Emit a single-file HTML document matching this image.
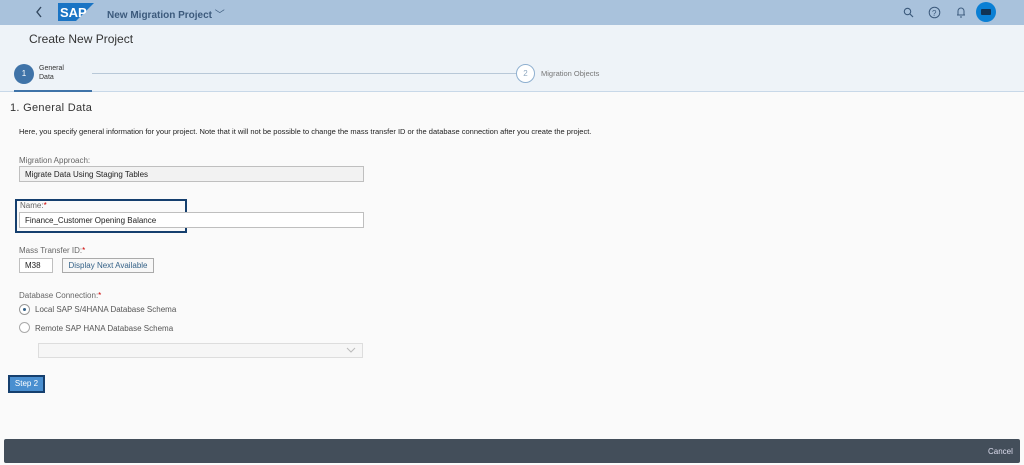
<!DOCTYPE html>
<html><head><meta charset="utf-8"><style>
*{box-sizing:border-box;margin:0;padding:0}
body{width:1024px;height:465px;overflow:hidden;background:#fafafa;font-family:"Liberation Sans",sans-serif;position:relative;color:#333}
.abs{position:absolute}
.shell{left:0;top:0;width:1024px;height:25px;background:#a9c2dc}
.hdr{left:0;top:25px;width:1024px;height:67px;background:#eef3f8;border-bottom:1px solid #c8d8e8}
.lbl{font-size:8px;color:#666}
.inp{background:#fff;border:1px solid #bfbfbf;font-size:8px;color:#222;padding:0 5px;display:flex;align-items:center}
.star{color:#c00}
</style></head><body>
<div class="abs shell"></div>
<svg class="abs" style="left:34px;top:5px" width="10" height="14"><path d="M7 2 L3 7 L7 12" stroke="#32475e" stroke-width="1.4" fill="none"/></svg>
<svg class="abs" style="left:58px;top:3px" width="36" height="18"><polygon points="0,0 36,0 18,18 0,18" fill="#1a74c4"/><text x="2" y="14" font-family="Liberation Sans" font-weight="bold" font-size="13" fill="#fff">SAP</text></svg>
<div class="abs" style="left:107px;top:6px;font-size:10px;font-weight:bold;color:#3c5a7c">New Migration Project <span style="font-weight:normal">﹀</span></div>
<svg class="abs" style="left:903px;top:7px" width="11" height="11"><circle cx="4.5" cy="4.5" r="3.2" stroke="#3c5a7c" fill="none" stroke-width="1.1"/><path d="M7 7 L10 10" stroke="#3c5a7c" stroke-width="1.2"/></svg>
<svg class="abs" style="left:928px;top:6px" width="13" height="13"><circle cx="6.5" cy="6.5" r="5.3" stroke="#3c5a7c" fill="none" stroke-width="1"/><text x="4" y="10" font-size="8" fill="#3c5a7c" font-family="Liberation Sans">?</text></svg>
<svg class="abs" style="left:955px;top:6px" width="12" height="13"><path d="M3 9 V5 a3 3 0 0 1 6 0 V9 H2 H10 M5 11 H7" stroke="#3c5a7c" fill="none" stroke-width="1"/></svg>
<div class="abs" style="left:976px;top:2px;width:20px;height:20px;border-radius:50%;background:#0a7fd4"><div class="abs" style="left:5px;top:7px;width:10px;height:6px;background:#113355;border-radius:1px"></div></div>
<div class="abs hdr"></div>
<div class="abs" style="left:29px;top:32px;font-size:12px;color:#333">Create New Project</div>
<div class="abs" style="left:14px;top:64px;width:20px;height:20px;border-radius:50%;background:#3f73a8;color:#fff;font-size:8px;text-align:center;line-height:20px">1</div>
<div class="abs" style="left:39px;top:64px;font-size:7px;line-height:9px;color:#333">General<br>Data</div>
<div class="abs" style="left:14px;top:90px;width:78px;height:2px;background:#3f73a8"></div>
<div class="abs" style="left:92px;top:73px;width:424px;height:1px;background:#b8c8d8"></div>
<div class="abs" style="left:516px;top:64px;width:19px;height:19px;border-radius:50%;border:1px solid #8fb0d0;color:#8fa8c0;font-size:8px;text-align:center;line-height:17px;background:#fff">2</div>
<div class="abs" style="left:541px;top:69px;font-size:7.5px;color:#777">Migration Objects</div>
<div class="abs" style="left:10px;top:102px;font-size:11px;color:#333;letter-spacing:0.3px">1. General Data</div>
<div class="abs" style="left:19px;top:127px;font-size:7.5px;color:#222">Here, you specify general information for your project. Note that it will not be possible to change the mass transfer ID or the database connection after you create the project.</div>
<div class="abs lbl" style="left:19px;top:156px">Migration Approach:</div>
<div class="abs inp" style="left:19px;top:166px;width:345px;height:16px;background:#f2f2f2">Migrate Data Using Staging Tables</div>
<div class="abs" style="left:15px;top:199px;width:172px;height:34px;border:2px solid #153f6e"></div>
<div class="abs lbl" style="left:20px;top:201px">Name:<span class="star">*</span></div>
<div class="abs inp" style="left:19px;top:212px;width:345px;height:16px">Finance_Customer Opening Balance</div>
<div class="abs lbl" style="left:19px;top:246px">Mass Transfer ID:<span class="star">*</span></div>
<div class="abs inp" style="left:19px;top:258px;width:34px;height:15px">M38</div>
<div class="abs" style="left:62px;top:258px;width:92px;height:15px;border:1px solid #aaa;background:#f7f7f7;font-size:8px;color:#346187;text-align:center;line-height:13px">Display Next Available</div>
<div class="abs lbl" style="left:19px;top:291px">Database Connection:<span class="star">*</span></div>
<div class="abs" style="left:19px;top:304px;width:11px;height:11px;border-radius:50%;border:1px solid #999;background:#fff"><div class="abs" style="left:3px;top:3px;width:3px;height:3px;border-radius:50%;background:#346187"></div></div>
<div class="abs lbl" style="left:35px;top:305px;color:#555">Local SAP S/4HANA Database Schema</div>
<div class="abs" style="left:19px;top:322px;width:11px;height:11px;border-radius:50%;border:1px solid #aaa;background:#fff"></div>
<div class="abs lbl" style="left:35px;top:324px;color:#555">Remote SAP HANA Database Schema</div>
<div class="abs" style="left:38px;top:343px;width:325px;height:15px;border:1px solid #ddd;background:#f6f6f6"></div>
<svg class="abs" style="left:346px;top:347px" width="10" height="7"><path d="M1 1 L5 5 L9 1" stroke="#bbb" fill="none"/></svg>
<div class="abs" style="left:8px;top:375px;width:37px;height:18px;border:2px solid #153f6e;background:#4a8fd0;color:#fff;font-size:8px;text-align:center;line-height:14px">Step 2</div>
<div class="abs" style="left:4px;top:439px;width:1016px;height:24px;background:#434e5a;border-radius:2px"></div>
<div class="abs" style="left:988px;top:447px;font-size:8px;color:#dde">Cancel</div>
</body></html>
